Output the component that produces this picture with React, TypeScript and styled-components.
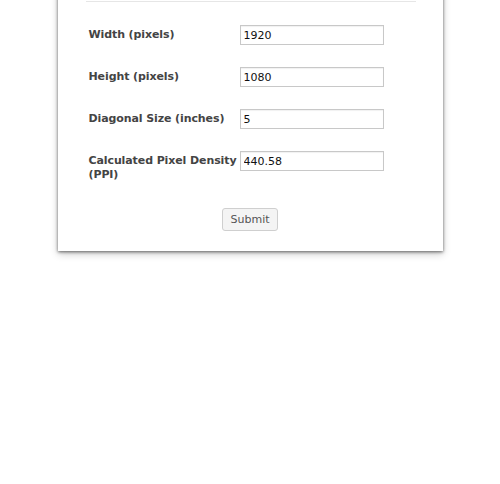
import { createGlobalStyle, styled } from "styled-components"

const Global = createGlobalStyle`
    body {
        margin: 0;
        background: #ffffff;
        font-family: "DejaVu Sans", Verdana, sans-serif;
    }
`

const Page = styled.div`
    min-height: 100vh;
    overflow: hidden;
`

const Card = styled.div`
    width: 385px;
    margin: -20px auto 0;
    padding: 20px 0 20px;
    background: #ffffff;
    box-shadow: 0 1px 3px rgba(0, 0, 0, 0.55), 0 3px 8px rgba(0, 0, 0, 0.2);
    box-sizing: border-box;
`

const Rule = styled.div`
    height: 1px;
    margin: 1px 27px 0 28px;
    background: #e6e6e6;
`

const Form = styled.form`
    padding: 23px 31px 0;
`

const Row = styled.div`
    display: flex;
    align-items: flex-start;
    margin-bottom: 22px;
`

const Label = styled.label`
    width: 151px;
    padding: 3px 0 0 0;
    box-sizing: border-box;
    font-size: 11px;
    line-height: 14px;
    font-weight: bold;
    letter-spacing: -0.1px;
    color: #444444;
`

const Field = styled.input`
    width: 144px;
    height: 20px;
    box-sizing: border-box;
    margin: 0;
    padding: 0 3px;
    border: 1px solid #c8c8c8;
    box-shadow: inset 0 1px 1px rgba(0, 0, 0, 0.06);
    font-family: "DejaVu Sans", Verdana, sans-serif;
    font-size: 11px;
    color: #111111;
    outline: none;
`

const Actions = styled.div`
    display: flex;
    justify-content: center;
    padding-top: 4px;
`

const Button = styled.button`
    width: 56px;
    height: 23px;
    padding: 0;
    border: 1px solid #cfcfcf;
    border-radius: 3px;
    background: #f4f4f4;
    font-family: "DejaVu Sans", Verdana, sans-serif;
    font-size: 11px;
    color: #555555;
`

const fields = [
    { label: "Width (pixels)", value: "1920" },
    { label: "Height (pixels)", value: "1080" },
    { label: "Diagonal Size (inches)", value: "5" },
    { label: "Calculated Pixel Density (PPI)", value: "440.58" },
]

export default () => <>
    <Global />
    <Page>
        <Card>
            <Rule />
            <Form onSubmit={e => e.preventDefault()}>
                {fields.map(f => (
                    <Row key={f.label}>
                        <Label>{f.label}</Label>
                        <Field defaultValue={f.value} />
                    </Row>
                ))}
                <Actions>
                    <Button type="submit">Submit</Button>
                </Actions>
            </Form>
        </Card>
    </Page>
</>
